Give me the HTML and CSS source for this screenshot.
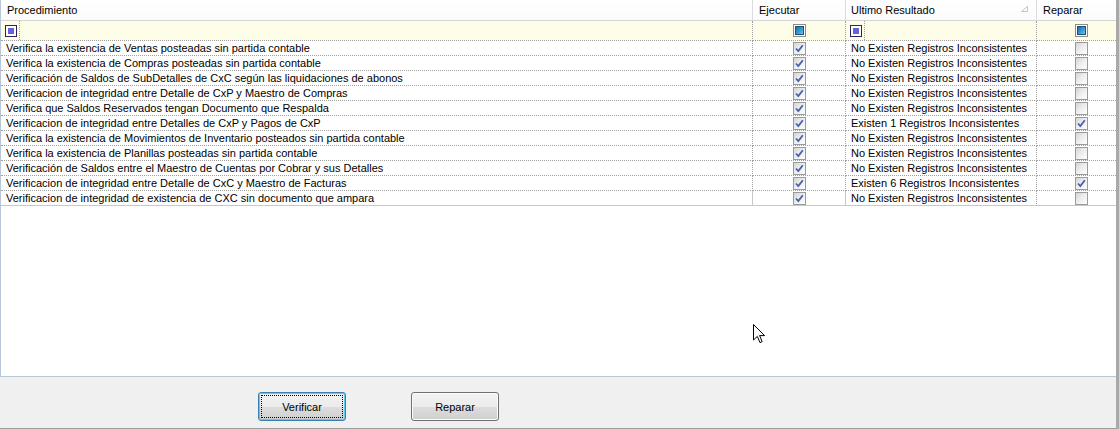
FILE: index.html
```html
<!DOCTYPE html>
<html lang="es">
<head>
<meta charset="utf-8">
<title>Procedimientos</title>
<link rel="stylesheet" href="styles.css">
</head>
<body>
<div class="window">
  <div class="main">
    <div class="grid">
      <div class="row head">
        <div class="cell c1">Procedimiento</div>
        <div class="cell c2">Ejecutar</div>
        <div class="cell c3">Ultimo Resultado
          <svg class="sort" width="7" height="6" viewBox="0 0 7 6"><path d="M6.5 0.5 L6.5 5.5 L0.5 5.5 Z" fill="none" stroke="#c4c4c4" stroke-width="1"/></svg>
        </div>
        <div class="cell c4">Reparar</div>
      </div>
      <div class="row filter">
        <div class="cell c1"><span class="ficon-wrap"><span class="ficon"><span></span></span></span></div>
        <div class="cell c2 center"><span class="ind"><span></span></span></div>
        <div class="cell c3"><span class="ficon-wrap"><span class="ficon"><span></span></span></span></div>
        <div class="cell c4 center shift"><span class="ind"><span></span></span></div>
      </div>

      <div class="row data">
        <div class="cell c1">Verifica la existencia de Ventas posteadas sin partida contable</div>
        <div class="cell c2 center"><span class="cb on"><svg viewBox="0 0 13 13"><path d="M3 6.5 L5.3 9 L9.8 3.2" /></svg></span></div>
        <div class="cell c3">No Existen Registros Inconsistentes</div>
        <div class="cell c4 center shift"><span class="cb"></span></div>
      </div>
      <div class="row data">
        <div class="cell c1">Verifica la existencia de Compras posteadas sin partida contable</div>
        <div class="cell c2 center"><span class="cb on"><svg viewBox="0 0 13 13"><path d="M3 6.5 L5.3 9 L9.8 3.2" /></svg></span></div>
        <div class="cell c3">No Existen Registros Inconsistentes</div>
        <div class="cell c4 center shift"><span class="cb"></span></div>
      </div>
      <div class="row data">
        <div class="cell c1">Verificación de Saldos de SubDetalles de CxC según las liquidaciones de abonos</div>
        <div class="cell c2 center"><span class="cb on"><svg viewBox="0 0 13 13"><path d="M3 6.5 L5.3 9 L9.8 3.2" /></svg></span></div>
        <div class="cell c3">No Existen Registros Inconsistentes</div>
        <div class="cell c4 center shift"><span class="cb"></span></div>
      </div>
      <div class="row data">
        <div class="cell c1">Verificacion de integridad entre Detalle de CxP y Maestro de Compras</div>
        <div class="cell c2 center"><span class="cb on"><svg viewBox="0 0 13 13"><path d="M3 6.5 L5.3 9 L9.8 3.2" /></svg></span></div>
        <div class="cell c3">No Existen Registros Inconsistentes</div>
        <div class="cell c4 center shift"><span class="cb"></span></div>
      </div>
      <div class="row data">
        <div class="cell c1">Verifica que Saldos Reservados tengan Documento que Respalda</div>
        <div class="cell c2 center"><span class="cb on"><svg viewBox="0 0 13 13"><path d="M3 6.5 L5.3 9 L9.8 3.2" /></svg></span></div>
        <div class="cell c3">No Existen Registros Inconsistentes</div>
        <div class="cell c4 center shift"><span class="cb"></span></div>
      </div>
      <div class="row data">
        <div class="cell c1">Verificacion de integridad entre Detalles de CxP y Pagos de CxP</div>
        <div class="cell c2 center"><span class="cb on"><svg viewBox="0 0 13 13"><path d="M3 6.5 L5.3 9 L9.8 3.2" /></svg></span></div>
        <div class="cell c3">Existen 1 Registros Inconsistentes</div>
        <div class="cell c4 center shift"><span class="cb on"><svg viewBox="0 0 13 13"><path d="M3 6.5 L5.3 9 L9.8 3.2" /></svg></span></div>
      </div>
      <div class="row data">
        <div class="cell c1">Verifica la existencia de Movimientos de Inventario posteados sin partida contable</div>
        <div class="cell c2 center"><span class="cb on"><svg viewBox="0 0 13 13"><path d="M3 6.5 L5.3 9 L9.8 3.2" /></svg></span></div>
        <div class="cell c3">No Existen Registros Inconsistentes</div>
        <div class="cell c4 center shift"><span class="cb"></span></div>
      </div>
      <div class="row data">
        <div class="cell c1">Verifica la existencia de Planillas posteadas sin partida contable</div>
        <div class="cell c2 center"><span class="cb on"><svg viewBox="0 0 13 13"><path d="M3 6.5 L5.3 9 L9.8 3.2" /></svg></span></div>
        <div class="cell c3">No Existen Registros Inconsistentes</div>
        <div class="cell c4 center shift"><span class="cb"></span></div>
      </div>
      <div class="row data">
        <div class="cell c1">Verificación de Saldos entre el Maestro de Cuentas por Cobrar y sus Detalles</div>
        <div class="cell c2 center"><span class="cb on"><svg viewBox="0 0 13 13"><path d="M3 6.5 L5.3 9 L9.8 3.2" /></svg></span></div>
        <div class="cell c3">No Existen Registros Inconsistentes</div>
        <div class="cell c4 center shift"><span class="cb"></span></div>
      </div>
      <div class="row data">
        <div class="cell c1">Verificacion de integridad entre Detalle de CxC y Maestro de Facturas</div>
        <div class="cell c2 center"><span class="cb on"><svg viewBox="0 0 13 13"><path d="M3 6.5 L5.3 9 L9.8 3.2" /></svg></span></div>
        <div class="cell c3">Existen 6 Registros Inconsistentes</div>
        <div class="cell c4 center shift"><span class="cb on"><svg viewBox="0 0 13 13"><path d="M3 6.5 L5.3 9 L9.8 3.2" /></svg></span></div>
      </div>
      <div class="row data last">
        <div class="cell c1">Verificacion de integridad de existencia de CXC sin documento que ampara</div>
        <div class="cell c2 center"><span class="cb on"><svg viewBox="0 0 13 13"><path d="M3 6.5 L5.3 9 L9.8 3.2" /></svg></span></div>
        <div class="cell c3">No Existen Registros Inconsistentes</div>
        <div class="cell c4 center shift"><span class="cb"></span></div>
      </div>
    </div>
    <div class="panel">
      <button class="btn focus"><span>Verificar</span></button>
      <button class="btn"><span>Reparar</span></button>
    </div>
  </div>
  <div class="strip"></div>
  <svg class="cursor" width="13" height="20" viewBox="0 0 13 20"><path d="M0.5 0.5 L0.5 16 L4.3 12.4 L7 18.6 L9.2 17.6 L6.6 11.6 L11.6 11.6 Z" fill="#fff" stroke="#000" stroke-width="1" stroke-linejoin="miter"/></svg>
</div>
</body>
</html>
```

FILE: styles.css
```css
* { box-sizing: border-box; }
html, body { margin: 0; padding: 0; background: #f0f0f0; }
body {
  font-family: "Liberation Sans", Arial, sans-serif;
  font-size: 11px;
  color: #000;
}
.window {
  position: relative;
  width: 1119px;
  height: 429px;
  display: flex;
}
.main {
  width: 1116px;
  display: flex;
  flex-direction: column;
}
.strip {
  width: 3px;
  background: #a9a9a9;
}
.grid {
  height: 377px;
  background: #fff;
  border-left: 1px solid #b7c7d8;
  border-bottom: 1px solid #b7c7d8;
}
.row {
  display: grid;
  grid-template-columns: 752px 93px 191px 79px;
}
.cell {
  display: flex;
  align-items: center;
  white-space: nowrap;
  overflow: hidden;
}
.head {
  height: 21px;
  background: linear-gradient(#ffffff, #fbfbfc);
  border-bottom: 1px solid #d5d5d5;
}
.head .cell {
  padding-left: 6px;
  border-right: 1px solid #dcdcdc;
  box-shadow: 1px 0 0 #fff;
}
.head .c4 { border-right: none; }
.head .c3 { position: relative; padding-left: 5px; }
.sort { position: absolute; right: 8px; top: 6px; }

.filter {
  height: 20px;
  background: #fefde8;
}
.filter .cell,
.data .cell {
  border-right: 1px dotted #a0a0a0;
  border-bottom: 1px dotted #a0a0a0;
}
.filter .c4, .data .c4 { border-right: none; }
.filter .c1, .filter .c3 { padding-left: 3px; }
.ficon-wrap {
  height: 19px;
  padding: 0 2px 0 1px;
  display: flex;
  align-items: center;
  border-right: 1px dotted #a0a0a0;
}
.ficon {
  width: 12px;
  height: 12px;
  border: 1px solid #27285c;
  background: #fff;
  padding: 2px;
  display: block;
}
.ficon span {
  display: block;
  width: 6px;
  height: 6px;
  background: #6462dc;
}
.center { justify-content: center; }
.shift { padding-left: 10px; }
.ind {
  width: 13px;
  height: 13px;
  border: 1px solid #8c8c8c;
  background: #fff;
  padding: 1px;
  display: block;
}
.ind span {
  display: block;
  width: 9px;
  height: 9px;
  border: 1px solid #1d4f7f;
  background: linear-gradient(135deg, #1e6aa8 0%, #3f9fd2 60%, #6cc8ea 100%);
}

.data { height: 15px; }
.data .cell { padding-left: 5px; line-height: 14px; }
.data .center { padding-left: 0; }
.data .center.shift { padding-left: 10px; }
.data.last .cell { border-bottom: 1px solid #c8c8c8; }
.data.last .c1, .data.last .c2 { border-right: 1px solid #c8c8c8; }

.cb {
  width: 13px;
  height: 13px;
  border: 1px solid #9a9a9a;
  background: linear-gradient(135deg, #d4d4d4 0%, #ececec 45%, #ffffff 100%);
  display: block;
  position: relative;
}
.cb svg {
  position: absolute;
  left: -1px;
  top: -1px;
  width: 13px;
  height: 13px;
}
.cb svg path {
  fill: none;
  stroke: #4a60ab;
  stroke-width: 1.8;
}

.panel {
  flex: 1;
  display: flex;
  align-items: flex-start;
  padding: 15px 0 0 258px;
  gap: 65px;
  border-bottom: 1px solid #9c9c9c;
  background: #f0f0f0;
}
.btn {
  width: 88px;
  height: 29px;
  border: 1px solid #707070;
  border-radius: 3px;
  background: linear-gradient(#f2f2f2 0%, #ebebeb 50%, #dddddd 51%, #cfcfcf 100%);
  box-shadow: inset 0 0 0 1px #fcfcfc;
  font-family: "Liberation Sans", Arial, sans-serif;
  font-size: 11px;
  color: #000;
  padding: 2px;
  display: flex;
}
.btn span {
  flex: 1;
  display: flex;
  align-items: center;
  justify-content: center;
  border: 1px dotted transparent;
}
.btn.focus {
  border-color: #3c7fb1;
  box-shadow: inset 0 0 0 1px #5ec8f5;
}
.btn.focus span { border-color: #000; }
.cursor {
  position: absolute;
  left: 753px;
  top: 324px;
}
```
